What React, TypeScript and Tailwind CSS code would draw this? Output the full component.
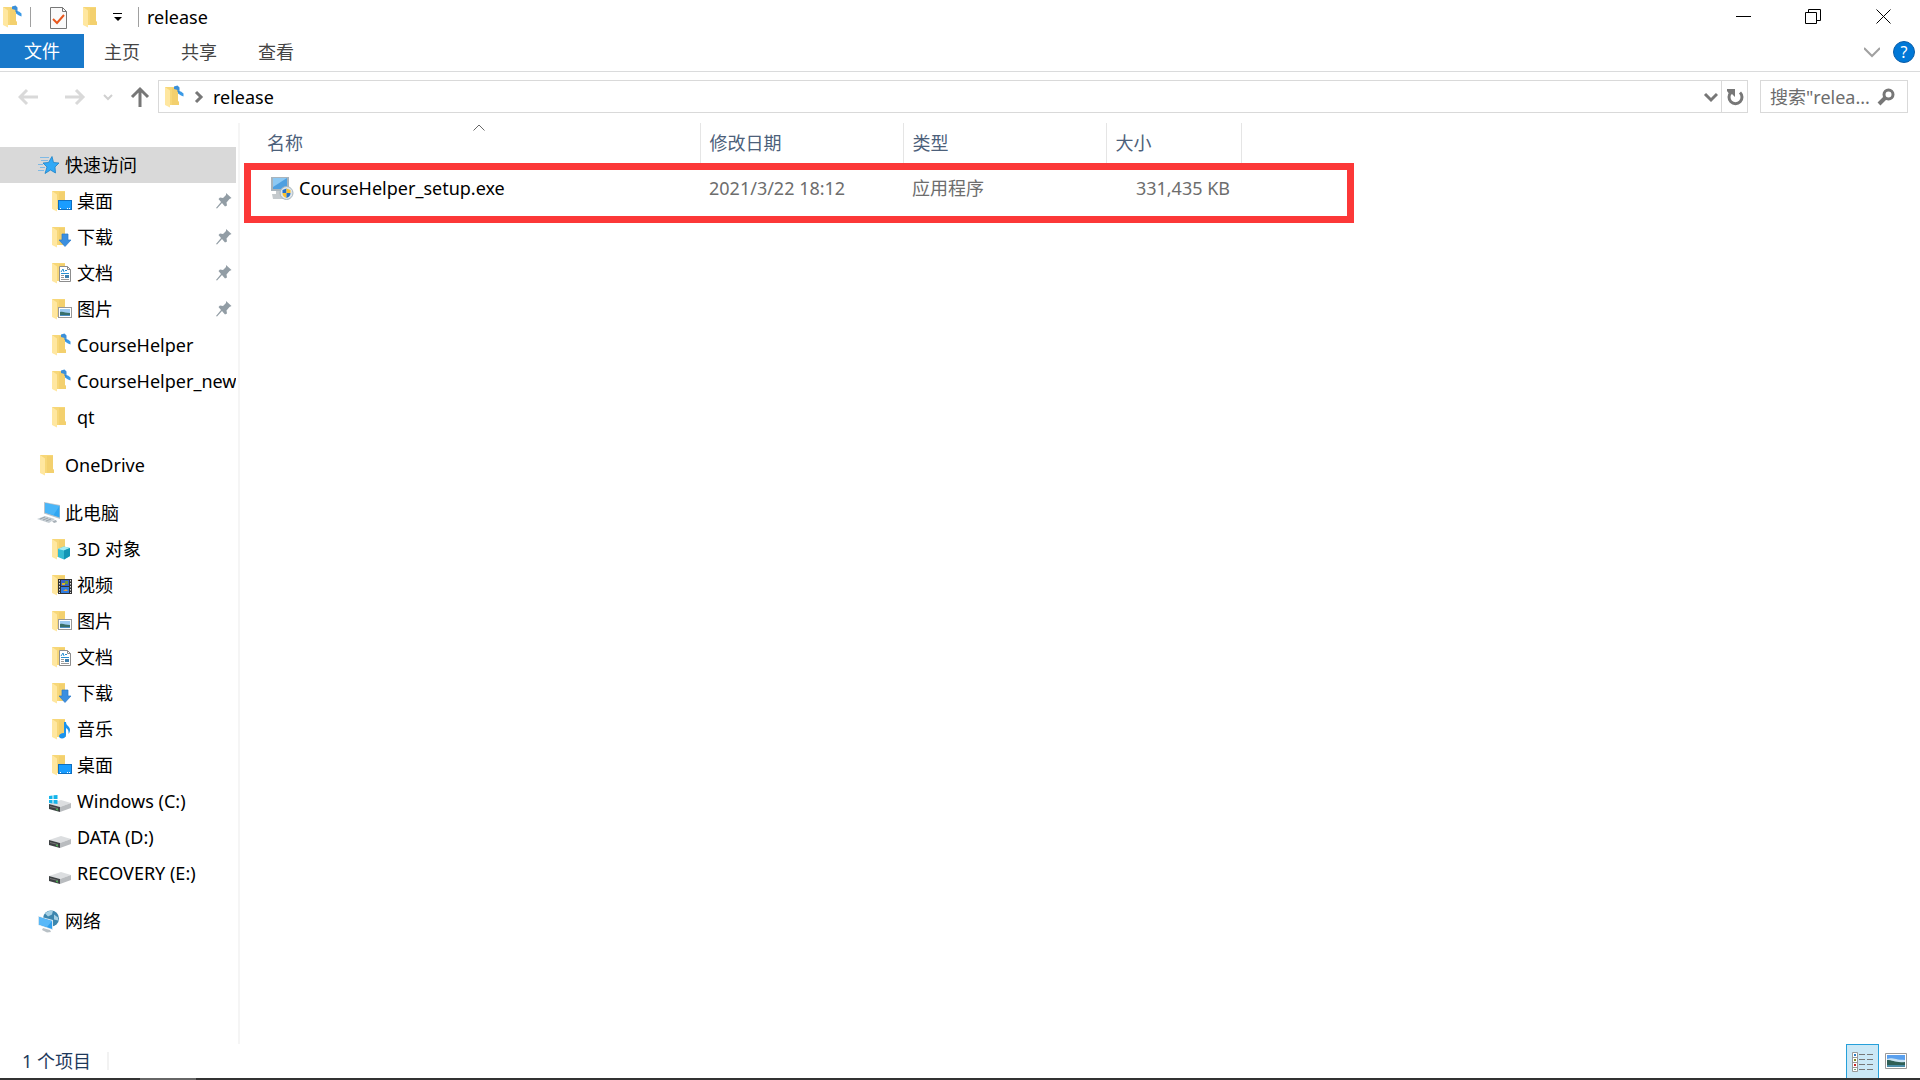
import type { ReactNode } from "react";

function Svg({ size = 24, children }: { size?: number; children: ReactNode }) {
  return (
    <svg width={size} height={size} viewBox={`0 0 ${size} ${size}`} fill="none" className="shrink-0" aria-hidden="true">
      {children}
    </svg>
  );
}

function FolderShape() {
  return (
    <>
      <path d="M3 2h13v14l1 1v3H3z" fill="#f7d778" />
      <path d="M10 3h6v13l1 1v3h-7z" fill="#f0cb68" opacity=".6" />
      <path d="M3 2l5 3.500v17L3 20z" fill="#ffe7a0" />
    </>
  );
}

function FolderIcon() {
  return (
    <Svg>
      <FolderShape />
    </Svg>
  );
}

function SyncFolderIcon() {
  return (
    <Svg>
      <FolderShape />
      <path d="M12 1.500l3.500-1 2 2v4l-2-1.500-3.500-1z" fill="#3b8fd9" />
      <path d="M16 6l3 .5 2.500 2v3l-2.500-1-3-2z" fill="#3b9ae6" />
      <path d="M15.500 5.500l2 2" stroke="#2f86d6" strokeWidth="1.500" />
    </Svg>
  );
}

function DesktopIcon() {
  return (
    <Svg>
      <FolderShape />
      <rect x="9.500" y="11.500" width="13" height="9" fill="#1a9dff" stroke="#0f6fc0" />
      <path d="M11 19.500h1M18 19.500h1M20 19.500h1" stroke="#fff" />
    </Svg>
  );
}

function DownloadIcon() {
  return (
    <Svg>
      <FolderShape />
      <path d="M13 9h6v6h3l-6 6.500L10 15h3z" fill="#3b8fe0" stroke="#2a78c8" strokeWidth=".7" />
    </Svg>
  );
}

function DocumentIcon() {
  return (
    <Svg>
      <FolderShape />
      <path d="M10.500 5.500h8l3 3v12h-11z" fill="#fff" stroke="#8d8d8d" />
      <path d="M18.500 5.500v3h3" stroke="#8d8d8d" />
      <path d="M12 11l2-3 1 3M16 9.500h2M12 12.500h8" stroke="#2a8fd0" />
      <path d="M12 14.500h3M12 16.500h3M12 18.500h8" stroke="#999" />
      <path d="M16 14h4v3h-4z" fill="#3d7fae" />
    </Svg>
  );
}

function PicturesIcon() {
  return (
    <Svg>
      <FolderShape />
      <rect x="9.500" y="10.500" width="13" height="10" fill="#fff" stroke="#999" />
      <path d="M11 12h10v7H11z" fill="#9ccbf2" />
      <path d="M11 15c3-1 5 1 10 1v3H11z" fill="#39706b" />
      <path d="M11 18h10v1H11z" fill="#4c8fc4" />
    </Svg>
  );
}

function VideoIcon() {
  return (
    <Svg>
      <FolderShape />
      <path d="M9 6h14v15H9z" fill="#333" />
      <path d="M12 7h8v6h-8z" fill="#3a63c8" />
      <path d="M12 14h8v6h-8z" fill="#2f7ce0" />
      <path d="M13 10h3v2h-3z" fill="#d9b62c" />
      <path d="M16 8h3v3h-3z" fill="#6a9c3c" />
      <path d="M14 18l3-2 2 2z" fill="#e8a13c" />
      <path d="M10.500 7v13M21.500 7v13" stroke="#ddd" strokeDasharray="1.500 1.500" />
    </Svg>
  );
}

function ObjectsIcon() {
  return (
    <Svg>
      <FolderShape />
      <path d="M9 12l6-2.500 6 1.500v8l-6 3.500-6-2.500z" fill="#35bcd2" />
      <path d="M9 12l6-2.500 6 1.500-6 2.500z" fill="#a6ecf3" />
      <path d="M15 13.500l6-2.500v8l-6 3.500z" fill="#1296b5" />
    </Svg>
  );
}

function MusicIcon() {
  return (
    <Svg>
      <FolderShape />
      <path d="M15 5h2c0 4 4 4 4 8 0 2-1 3-1.500 4 .5-3-.5-5-2.500-6v7c0 2-2 3.500-4 3.500S10 20.500 10 19s2-3 5-3z" fill="#1a93ee" />
    </Svg>
  );
}

function StarIcon() {
  return (
    <Svg>
      <path d="M3 4.500h9M4 7.500h7M1 11.500h5M3 14.500h5M1 17.500h6" stroke="#7fb9e4" />
      <path d="M15 3.500l1.500 6 5.500.5-4 4 .5 6-5-3-5.500 3.500 2-6.500L6 10l5.500-.5z" fill="#30a9f6" stroke="#1c82c8" strokeWidth=".8" />
    </Svg>
  );
}

function ComputerIcon() {
  return (
    <Svg>
      <path d="M7 1l16 3v14L7 12.500z" fill="#b7c3cc" />
      <path d="M8 2l14.500 3v11.500L8 11.500z" fill="#2ea6f2" />
      <path d="M8 2l14.500 3-6 9L8 11.500z" fill="#5bc0fb" opacity=".6" />
      <path d="M0 18l8-3 10 3-6 4z" fill="#c6ced4" />
      <path d="M3 18l5-2M6 19l5-2M9 20l5-2" stroke="#8e989f" strokeWidth=".8" />
      <path d="M15 20l4-1 1 2-3 1z" fill="#a8b1b8" />
    </Svg>
  );
}

function DriveShape() {
  return (
    <>
      <path d="M0 15l12-4 10 3-11 4z" fill="#dcdee0" />
      <path d="M11 18l11-4v5l-11 4z" fill="#b9bcbf" />
      <path d="M0 15l11 3v5L0 20z" fill="#3d4143" />
      <path d="M1 17.500l8 2" stroke="#777" />
      <path d="M7 19.500l2 .5v1.500l-2-.5z" fill="#4caf50" />
    </>
  );
}

function DriveIcon() {
  return (
    <Svg>
      <DriveShape />
    </Svg>
  );
}

function WindowsDriveIcon() {
  return (
    <Svg>
      <DriveShape />
      <path d="M0 7l3.500-.5v3.500H0zM4.500 6.300L8.500 6v4h-4zM0 11h3.500v3.500L0 14zM4.500 11h4v4l-4-.5z" fill="#14b4ea" />
    </Svg>
  );
}

function NetworkIcon() {
  return (
    <Svg>
      <circle cx="14" cy="9.500" r="8" fill="#3c86ae" />
      <path d="M8 4.500c3-3 6-3 8-3l-1 4-4 2zM17 5.500l4 3v3l-4-1z" fill="#a5d0e4" />
      <path d="M1 7l15 4v10L1 16z" fill="#d5e6f0" />
      <path d="M2 8l13 4v8L2 15.500z" fill="#2f9fee" />
      <path d="M2 8l13 4-5 6-8-2.500z" fill="#58b8f8" />
      <path d="M6 19l7 2 1 2-4 .5-5-2.500z" fill="#b9c1c6" />
    </Svg>
  );
}

function SetupIcon() {
  return (
    <Svg>
      <path d="M1 1h18v14H1z" fill="#a9b4bc" />
      <path d="M3 2h14v11H3z" fill="#4e9fe0" />
      <path d="M3 2h14L3 11z" fill="#8cc8f3" />
      <path d="M6 15h7v3H6zM2 18h14v5H3z" fill="#c5cacd" />
      <circle cx="16.500" cy="17" r="6.500" fill="#dfe6ea" stroke="#a7b5be" />
      <path d="M16.500 12.500l-4 1.500v3h4z" fill="#2672c9" />
      <path d="M16.500 12.500l4 1.500v3h-4z" fill="#fbc02d" />
      <path d="M12.500 17h4v5c-3-1-4-3-4-5z" fill="#fbc02d" />
      <path d="M20.500 17h-4v5c3-1 4-3 4-5z" fill="#2672c9" />
    </Svg>
  );
}

function CheckDocIcon() {
  return (
    <Svg>
      <path d="M4.500 2.500h12l4 4v17h-16z" fill="#fafafa" stroke="#777" />
      <path d="M16.500 2.500v4h4" stroke="#777" />
      <path d="M7 14l4 4 7-8" stroke="#e8571c" strokeWidth="2" />
    </Svg>
  );
}

function PinIcon() {
  return (
    <Svg size={16}>
      <path d="M10 0l5.500 5-2 1-3 3.500.5 3-2 1-3-3.500L1 15.500 0 15l5-6L2.500 6l1.500-1.500 3 .5 3-3z" fill="#929da5" />
    </Svg>
  );
}

function DetailsIcon() {
  return (
    <Svg size={22}>
      <path d="M.5 1.500h5v19h-5z" fill="#fff" stroke="#999" />
      <path d="M1 6.500h4M1 11.500h4M1 16.500h4" stroke="#999" />
      <path d="M2 3h2v2H2z" fill="#2a7fc4" />
      <path d="M2 8h2v2H2z" fill="#7e8a26" />
      <path d="M2 13h2v2H2z" fill="#c62828" />
      <path d="M2 18h2v1H2z" fill="#6da06d" />
      <path d="M7 3.500h6M15 3.500h6M7 8.500h6M15 8.500h6M7 13.500h6M15 13.500h6M7 18.500h6M15 18.500h6" stroke="#777" />
    </Svg>
  );
}

function ThumbnailsIcon() {
  return (
    <Svg size={22}>
      <path d="M.5 3.500h21v15H.5z" fill="#fff" stroke="#999" />
      <path d="M2 5h18v12H2z" fill="#5aa0ee" />
      <path d="M2 9c5-2 8 1 18 1v3H2z" fill="#c9e2f2" />
      <path d="M2 10c6 0 8 3 18 2v3H2z" fill="#2f5f56" />
      <path d="M2 15h18v2H2z" fill="#4b8ca8" />
    </Svg>
  );
}

const quickAccess = [
  { name: "桌面", icon: <DesktopIcon />, pinned: true },
  { name: "下载", icon: <DownloadIcon />, pinned: true },
  { name: "文档", icon: <DocumentIcon />, pinned: true },
  { name: "图片", icon: <PicturesIcon />, pinned: true },
  { name: "CourseHelper", icon: <SyncFolderIcon /> },
  { name: "CourseHelper_new", icon: <SyncFolderIcon /> },
  { name: "qt", icon: <FolderIcon /> },
];

const thisPc = [
  { name: "3D 对象", icon: <ObjectsIcon /> },
  { name: "视频", icon: <VideoIcon /> },
  { name: "图片", icon: <PicturesIcon /> },
  { name: "文档", icon: <DocumentIcon /> },
  { name: "下载", icon: <DownloadIcon /> },
  { name: "音乐", icon: <MusicIcon /> },
  { name: "桌面", icon: <DesktopIcon /> },
  { name: "Windows (C:)", icon: <WindowsDriveIcon /> },
  { name: "DATA (D:)", icon: <DriveIcon /> },
  { name: "RECOVERY (E:)", icon: <DriveIcon /> },
];

type ItemProps = { name: string; icon: ReactNode; pinned?: boolean; root?: boolean; active?: boolean };

function TreeItem({ name, icon, pinned, root, active }: ItemProps) {
  return (
    <li>
      <a
        href="#"
        className={`flex h-9 items-center gap-1 overflow-hidden whitespace-nowrap ${root ? "pl-[37px]" : "pl-[49px]"} ${
          active ? "bg-[#d9d9d9]" : "hover:bg-[#e5f3ff]"
        }`}
      >
        {icon}
        <span>{name}</span>
        {pinned && (
          <span className="mr-1 ml-auto">
            <PinIcon />
          </span>
        )}
      </a>
    </li>
  );
}

function TitleBar() {
  return (
    <header className="flex h-[34px] items-start justify-between">
      <div className="flex items-center pt-[5px]">
        <SyncFolderIcon />
        <span className="mx-[6px] h-5 w-px bg-[#a0a0a0]" />
        <button aria-label="属性" className="ml-[9px]">
          <CheckDocIcon />
        </button>
        <button aria-label="新建文件夹" className="ml-[10px]">
          <FolderIcon />
        </button>
        <button aria-label="自定义快速访问工具栏" className="ml-[6px]">
          <Svg size={16}>
            <path d="M3 4.500h9" stroke="#000" />
            <path d="M4 8h8l-4 4z" fill="#000" />
          </Svg>
        </button>
        <span className="mr-2 ml-3 h-5 w-px bg-[#a0a0a0]" />
        <h1>release</h1>
      </div>
      <div className="flex">
        <button aria-label="最小化" className="flex h-[34px] w-[70px] items-center justify-center">
          <Svg size={16}>
            <path d="M1 7.500h15" stroke="#000" />
          </Svg>
        </button>
        <button aria-label="还原" className="flex h-[34px] w-[70px] items-center justify-center">
          <Svg size={16}>
            <path d="M.5 3.500h11v11H.5zM3.500 3.500v-3h12v11h-4" stroke="#000" />
          </Svg>
        </button>
        <button aria-label="关闭" className="flex h-[34px] w-[72px] items-center justify-center">
          <Svg size={16}>
            <path d="M.5.5l14 14M14.500.5l-14 14" stroke="#000" />
          </Svg>
        </button>
      </div>
    </header>
  );
}

function Ribbon() {
  return (
    <nav className="flex h-[38px] items-start border-b border-[#dadbdc] text-[#444]">
      <button className="h-[34px] w-[84px] bg-[#1979ca] text-white">文件</button>
      <button className="ml-[10px] h-9 w-14">主页</button>
      <button className="ml-[21px] h-9 w-14">共享</button>
      <button className="ml-[21px] h-9 w-14">查看</button>
      <button aria-label="展开功能区" className="mt-[10px] ml-auto">
        <Svg size={16}>
          <path d="M0 4l8 8 8-8" stroke="#a0a0a0" strokeWidth="2" />
        </Svg>
      </button>
      <button
        aria-label="帮助"
        className="mt-[7px] mr-[5px] ml-[13px] flex size-[22px] items-center justify-center rounded-full border border-[#0b5da8] bg-[#0078d7] text-base leading-none text-white"
      >
        ?
      </button>
    </nav>
  );
}

function AddressBar() {
  return (
    <div className="flex items-center pt-2 pr-3 pl-[18px]">
      <button aria-label="后退">
        <Svg>
          <path d="M9 5l-7 7 7 7M2 12h18" stroke="#d9d9d9" strokeWidth="3" />
        </Svg>
      </button>
      <button aria-label="前进" className="ml-5">
        <Svg>
          <path d="M14 5l7 7-7 7M21 12H3" stroke="#d9d9d9" strokeWidth="3" />
        </Svg>
      </button>
      <button aria-label="最近浏览的位置" className="ml-[14px]">
        <Svg size={16}>
          <path d="M4 6l4 4 4-4" stroke="#d0d0d0" strokeWidth="2" />
        </Svg>
      </button>
      <button aria-label="上移" className="ml-3">
        <Svg>
          <path d="M4 12l8-8 8 8M12 4v18" stroke="#777" strokeWidth="3" />
        </Svg>
      </button>
      <div className="ml-[6px] flex h-[33px] flex-1 items-center border border-[#d9d9d9]">
        <span className="ml-[3px]">
          <SyncFolderIcon />
        </span>
        <span className="mx-[5px]">
          <Svg size={16}>
            <path d="M5 3l5 5-5 5" stroke="#777" strokeWidth="3" />
          </Svg>
        </span>
        <a href="#" className="ml-px">
          release
        </a>
        <button aria-label="以前的位置" className="mr-[3px] ml-auto">
          <Svg size={16}>
            <path d="M3 5l6 6 6-6" stroke="#777" strokeWidth="3" />
          </Svg>
        </button>
        <button aria-label="刷新" className="flex h-full w-[26px] items-center justify-center border-l border-[#d9d9d9]">
          <Svg size={18}>
            <path d="M5 4.500a6.500 6.500 0 1 0 9 0" stroke="#777" strokeWidth="3" />
            <path d="M1 1h8v8l-3-3-2 1-3-4z" fill="#777" />
          </Svg>
        </button>
      </div>
      <div className="ml-3 flex h-[33px] w-[148px] items-center border border-[#d9d9d9] pr-3 pl-[9px]">
        <input
          type="text"
          aria-label="搜索"
          placeholder={'搜索"relea...'}
          className="w-full min-w-0 bg-transparent outline-none placeholder:text-[#6d6d6d] placeholder:opacity-100"
        />
        <Svg size={18}>
          <circle cx="11.500" cy="6.500" r="4.500" stroke="#777" strokeWidth="3" />
          <path d="M8 10l-6 6" stroke="#777" strokeWidth="4" />
        </Svg>
      </div>
    </div>
  );
}

function FileList() {
  return (
    <main className="flex-1">
      <div className="relative w-fit pl-[27px]">
        <table className="table-fixed border-collapse text-left whitespace-nowrap">
          <thead>
            <tr className="h-10 text-[#4c607a]">
              <th scope="col" className="relative w-[433px] border-r border-[#e5e5e5] font-normal">
                名称
                <span className="absolute top-0 left-[206px]">
                  <Svg size={12}>
                    <path d="M.5 7.500L6 2l5.500 5.500" stroke="#666" />
                  </Svg>
                </span>
              </th>
              <th scope="col" className="w-[203px] border-r border-[#e5e5e5] pl-[9px] font-normal">修改日期</th>
              <th scope="col" className="w-[203px] border-r border-[#e5e5e5] pl-[9px] font-normal">类型</th>
              <th scope="col" className="w-[135px] border-r border-[#e5e5e5] pl-[9px] font-normal">大小</th>
            </tr>
          </thead>
          <tbody>
            <tr className="h-[50px] text-[#6d6d6d]">
              <td>
                <a href="#" className="flex items-center gap-[5px] pl-[3px] text-black">
                  <SetupIcon />
                  CourseHelper_setup.exe
                </a>
              </td>
              <td className="pl-[9px]">2021/3/22 18:12</td>
              <td className="pl-[9px]">应用程序</td>
              <td className="pr-[11px] text-right">331,435 KB</td>
            </tr>
          </tbody>
        </table>
        <div className="pointer-events-none absolute top-10 -right-[112px] left-1 h-[60px] border-[7px] border-[#fc3838]" />
      </div>
    </main>
  );
}

export default function App() {
  return (
    <div className="flex min-h-screen flex-col bg-white font-['Noto_Sans','Noto_Sans_CJK_SC',sans-serif] text-[18px] leading-6 text-black">
      <TitleBar />
      <Ribbon />
      <AddressBar />
      <div className="flex flex-1 pt-[10px]">
        <aside className="flex w-60 shrink-0 flex-col gap-3 border-r-2 border-[#f5f5f5] pt-6 pr-[2px]">
          <ul>
            <TreeItem name="快速访问" icon={<StarIcon />} root active />
            {quickAccess.map((item) => (
              <TreeItem key={item.name} {...item} />
            ))}
          </ul>
          <ul>
            <TreeItem name="OneDrive" icon={<FolderIcon />} root />
          </ul>
          <ul>
            <TreeItem name="此电脑" icon={<ComputerIcon />} root />
            {thisPc.map((item) => (
              <TreeItem key={item.name} {...item} />
            ))}
          </ul>
          <ul>
            <TreeItem name="网络" icon={<NetworkIcon />} root />
          </ul>
        </aside>
        <FileList />
      </div>
      <footer className="flex h-[34px] items-center pl-[22px] text-[#1e395b]">
        <span>1 个项目</span>
        <span className="ml-4 h-[18px] w-[2px] bg-[#f2f2f2]" />
        <div className="ml-auto flex h-full items-center">
          <button aria-label="详细信息" className="flex h-full w-[33px] items-center justify-center border border-b-0 border-[#26a0da] bg-[#cbe8f6]">
            <DetailsIcon />
          </button>
          <button aria-label="大缩略图" className="mr-[13px] ml-[6px]">
            <ThumbnailsIcon />
          </button>
        </div>
      </footer>
      <div className="h-[2px] bg-[#333] pl-[140px]">
        <div className="h-full w-14 bg-[#666]" />
      </div>
    </div>
  );
}
